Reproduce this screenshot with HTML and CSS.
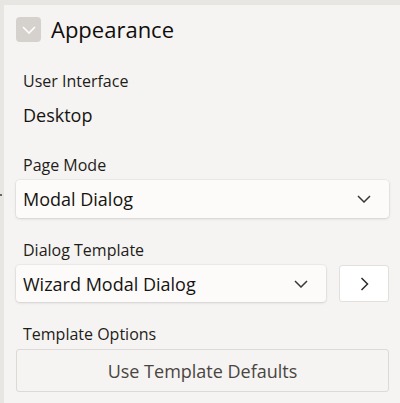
FILE: index.html
```html
<!DOCTYPE html>
<html>
<head>
<meta charset="utf-8">
<link rel="stylesheet" href="styles.css">
</head>
<body>
<div class="frame">
  <span class="tick"></span>
  <section class="panel">
    <header class="region-head">
      <span class="toggle">
        <svg width="14" height="8" viewBox="0 0 14 8"><path d="M1 1 L7 7 L13 1" fill="none" stroke="#fff" stroke-width="1.6"/></svg>
      </span>
      <h2 class="title">Appearance</h2>
    </header>

    <div class="field static">
      <div class="label">User Interface</div>
      <div class="value">Desktop</div>
    </div>

    <div class="field">
      <div class="label">Page Mode</div>
      <div class="select wide">
        <span class="sel-text">Modal Dialog</span>
        <svg class="chev" width="14" height="8" viewBox="0 0 14 8"><path d="M1 1 L7 7 L13 1" fill="none" stroke="#3b3734" stroke-width="1.5"/></svg>
      </div>
    </div>

    <div class="field">
      <div class="label">Dialog Template</div>
      <div class="row">
        <div class="select grow">
          <span class="sel-text">Wizard Modal Dialog</span>
          <svg class="chev" width="14" height="8" viewBox="0 0 14 8"><path d="M1 1 L7 7 L13 1" fill="none" stroke="#3b3734" stroke-width="1.5"/></svg>
        </div>
        <button class="go">
          <svg width="9" height="14" viewBox="0 0 9 14"><path d="M1.5 1 L7.5 7 L1.5 13" fill="none" stroke="#2f2b28" stroke-width="1.5"/></svg>
        </button>
      </div>
    </div>

    <div class="field">
      <div class="label">Template Options</div>
      <button class="defaults">Use Template Defaults</button>
    </div>
  </section>
</div>
</body>
</html>
```
FILE: styles.css
```css
html, body {
  margin: 0;
  padding: 0;
}
body {
  width: 400px;
  height: 403px;
  overflow: hidden;
  background: #e8e6e3;
  font-family: "Open Sans", "Noto Sans", sans-serif;
  color: #1d1a17;
}
.frame {
  position: relative;
  padding: 5px 0 0 4px;
  height: 398px;
}
.tick {
  position: absolute;
  left: 0;
  top: 194px;
  width: 2px;
  height: 2px;
  background: #6b6660;
}
.panel {
  background: #f5f4f2;
  height: 100%;
  padding: 12px 11px 0 12px;
  box-sizing: border-box;
}
.region-head {
  display: flex;
  align-items: center;
  height: 25px;
}
.toggle {
  width: 25px;
  height: 25px;
  border-radius: 4px;
  background: #d5d2ce;
  display: flex;
  align-items: center;
  justify-content: center;
}
.title {
  margin: 0 0 0 10px;
  font-size: 22px;
  font-weight: 400;
  color: #100d0b;
  line-height: 25px;
}
.field {
  display: flex;
  flex-direction: column;
}
.label {
  font-size: 16px;
  line-height: 20px;
  padding-left: 7px;
  color: #1f1c19;
  margin-bottom: 5px;
}
.static {
  margin-top: 29px;
}
.static .label {
  margin-bottom: 14px;
}
.value {
  font-size: 18px;
  line-height: 20px;
  padding-left: 7px;
  color: #161311;
  margin-bottom: 30px;
}
.select {
  height: 38px;
  background: #fcfbfa;
  border-radius: 4px;
  box-shadow: 0 0 0 1px rgba(0,0,0,0.03), 0 1px 3px rgba(0,0,0,0.12);
  display: flex;
  align-items: center;
  justify-content: space-between;
  padding: 0 18px 0 7px;
  box-sizing: border-box;
  margin-bottom: 22px;
}
.sel-text {
  font-size: 18px;
  color: #161311;
}
.row {
  display: flex;
  gap: 13px;
}
.grow {
  flex: 1;
  height: 37px;
}
.go {
  width: 50px;
  height: 37px;
  background: #ffffff;
  border: 1px solid #e2dfdc;
  border-radius: 3px;
  box-sizing: border-box;
  display: flex;
  align-items: center;
  justify-content: center;
  padding: 0;
}
.defaults {
  height: 43px;
  background: #f5f4f2;
  border: 1px solid #dcd9d6;
  border-radius: 3px;
  font-family: "Open Sans", "Noto Sans", sans-serif;
  font-size: 18px;
  color: #4a4541;
  padding: 0;
}
```
